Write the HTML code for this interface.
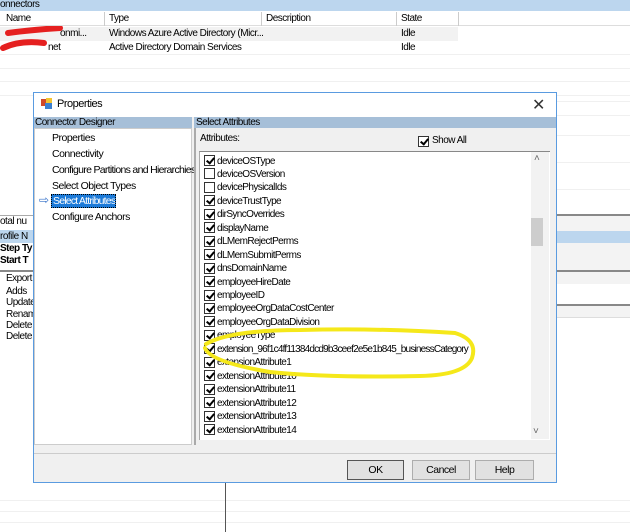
<!DOCTYPE html>
<html><head><style>
*{margin:0;padding:0;box-sizing:border-box}
body{width:630px;height:532px;overflow:hidden;background:#fff;font-family:"Liberation Sans",sans-serif;font-size:10.5px;color:#000;position:relative;letter-spacing:-0.5px}
.a{position:absolute;white-space:nowrap}
.hl{position:absolute;left:0;right:0;height:1px;background:#f0f0f0}
.cb{position:absolute;width:11px;height:11px;border:1px solid #333;background:#fff}
.cb.c::after{content:"";position:absolute;left:3px;top:0px;width:3px;height:6px;border:solid #000;border-width:0 2px 2px 0;transform:rotate(40deg)}
.btn{position:absolute;height:20px;border:1px solid #adadad;background:#e1e1e1;text-align:center;line-height:18px}
.it{font-size:10px;letter-spacing:-0.6px;line-height:11px}
</style></head><body>
<div class="a" style="left:0;top:0;width:630px;height:11px;background:#bcd6ee"></div>
<div class="a" style="left:0;top:-1px;font-size:10px">onnectors</div>
<div class="a" style="left:0;top:12px;width:630px;height:14px;border-bottom:1px solid #ddd;background:#fff"></div>
<div class="a" style="left:104px;top:12px;width:1px;height:14px;background:#ccc"></div>
<div class="a" style="left:261px;top:12px;width:1px;height:14px;background:#ccc"></div>
<div class="a" style="left:396px;top:12px;width:1px;height:14px;background:#ccc"></div>
<div class="a" style="left:458px;top:12px;width:1px;height:14px;background:#ccc"></div>
<div class="a" style="left:6px;top:13px;font-size:10px">Name</div>
<div class="a" style="left:109px;top:13px;font-size:10px">Type</div>
<div class="a" style="left:266px;top:13px;font-size:10px">Description</div>
<div class="a" style="left:401px;top:13px;font-size:10px">State</div>
<div class="a" style="left:0;top:27px;width:458px;height:14px;background:#f2f2f2"></div>
<div class="a" style="left:60px;top:28px;font-size:10px">onmi...</div>
<div class="a" style="left:109px;top:28px;font-size:10px">Windows Azure Active Directory (Micr...</div>
<div class="a" style="left:401px;top:28px;font-size:10px">Idle</div>
<div class="a" style="left:48px;top:42px;font-size:10px">net</div>
<div class="a" style="left:109px;top:42px;font-size:10px">Active Directory Domain Services</div>
<div class="a" style="left:401px;top:42px;font-size:10px">Idle</div>
<svg class="a" style="left:0;top:26px" width="80" height="32"><path d="M8 7 Q30 4 60 2" stroke="#e52020" stroke-width="6" fill="none" stroke-linecap="round"/><path d="M3 22 Q20 14 44 17" stroke="#e52020" stroke-width="6" fill="none" stroke-linecap="round"/></svg>
<div class="hl" style="top:54px"></div><div class="hl" style="top:68px"></div><div class="hl" style="top:81px"></div><div class="hl" style="top:95px"></div>
<div class="a" style="left:557px;top:101px;width:73px;height:1px;background:#f0f0f0"></div>
<div class="a" style="left:557px;top:115px;width:73px;height:1px;background:#f0f0f0"></div>
<div class="a" style="left:557px;top:135px;width:73px;height:1px;background:#f0f0f0"></div>
<div class="a" style="left:557px;top:162px;width:73px;height:1px;background:#f0f0f0"></div>
<div class="a" style="left:557px;top:189px;width:73px;height:1px;background:#f0f0f0"></div>
<div class="a" style="left:557px;top:214px;width:73px;height:2px;background:#888"></div>
<div class="a" style="left:557px;top:216px;width:73px;height:15px;background:#f3f3f3"></div>
<div class="a" style="left:557px;top:231px;width:73px;height:12px;background:#bcd6ee"></div>
<div class="a" style="left:557px;top:243px;width:73px;height:28px;background:#f3f3f3"></div>
<div class="a" style="left:557px;top:270px;width:73px;height:2px;background:#888"></div>
<div class="a" style="left:557px;top:272px;width:73px;height:12px;background:#f3f3f3"></div>
<div class="a" style="left:557px;top:304px;width:73px;height:2px;background:#888"></div>
<div class="a" style="left:557px;top:306px;width:73px;height:11px;background:#f3f3f3"></div>
<div class="a" style="left:557px;top:317px;width:73px;height:1px;background:#ddd"></div>
<div class="a" style="left:0;top:215px;width:33px;height:1px;background:#aaa"></div>
<div class="a" style="left:0;top:216px;font-size:10px">otal nu</div>
<div class="a" style="left:0;top:230px;width:33px;height:13px;background:#bcd6ee"></div>
<div class="a" style="left:0;top:231px;font-size:10px">rofile N</div>
<div class="a" style="left:0;top:243px;font-size:10px;font-weight:bold">Step Ty</div>
<div class="a" style="left:0;top:255px;font-size:10px;font-weight:bold">Start T</div>
<div class="a" style="left:0;top:270px;width:33px;height:2px;background:#888"></div>
<div class="a" style="left:6px;top:273px;font-size:10px">Export</div>
<div class="a" style="left:6px;top:286px;font-size:10px">Adds</div>
<div class="a" style="left:6px;top:297px;font-size:10px">Update</div>
<div class="a" style="left:6px;top:309px;font-size:10px">Renam</div>
<div class="a" style="left:6px;top:320px;font-size:10px">Delete</div>
<div class="a" style="left:6px;top:331px;font-size:10px">Delete</div>
<div class="a" style="left:0;top:500px;width:630px;height:1px;background:#f0f0f0"></div>
<div class="a" style="left:0;top:511px;width:630px;height:1px;background:#f0f0f0"></div>
<div class="a" style="left:0;top:522px;width:630px;height:1px;background:#f0f0f0"></div>
<div class="a" style="left:225px;top:482px;width:1px;height:50px;background:#555"></div>
<div class="a" style="left:33px;top:92px;width:524px;height:391px;border:1px solid #5a9be0;background:#f0f0f0">
 <div class="a" style="left:0;top:0;width:522px;height:24px;background:#fff"></div>
 <svg class="a" style="left:7px;top:5px" width="12" height="12"><rect x="0" y="1" width="7" height="7" fill="#d04a2a"/><rect x="5" y="0" width="6" height="5" fill="#f3c431"/><rect x="4" y="5" width="7" height="6" fill="#3b80d0"/></svg>
 <div class="a" style="left:23px;top:5px;font-size:11px">Properties</div>
 <div class="a" style="left:498px;top:2px;font-size:16px;color:#333">✕</div>
 <div class="a" style="left:0;top:24px;width:158px;height:11px;background:#a6bfd8;font-size:10px;line-height:11px;padding-left:1px">Connector Designer</div>
 <div class="a" style="left:0;top:35px;width:158px;height:317px;background:#fff;border:1px solid #ccc"></div>
 <div class="a" style="left:18px;top:39px">Properties</div>
 <div class="a" style="left:18px;top:55px">Connectivity</div>
 <div class="a" style="left:18px;top:71px;letter-spacing:-0.7px">Configure Partitions and Hierarchies</div>
 <div class="a" style="left:18px;top:87px">Select Object Types</div>
 <div class="a" style="left:5px;top:100px;color:#3470c8;font-size:12px">⇨</div>
 <div class="a" style="left:17px;top:101px;width:65px;height:14px;background:#1c7ad8;color:#fff;border:1px dotted #000;padding-left:1px;line-height:12px;letter-spacing:-0.8px;overflow:hidden">Select Attributes</div>
 <div class="a" style="left:18px;top:118px">Configure Anchors</div>
 <div class="a" style="left:160px;top:24px;width:362px;height:11px;background:#a6bfd8;font-size:10px;line-height:11px;padding-left:2px">Select Attributes</div>
 <div class="a" style="left:160px;top:35px;width:2px;height:317px;background:#aaa"></div>
 <div class="a" style="left:166px;top:40px;font-size:10px">Attributes:</div>
 <div class="cb c" style="left:384px;top:43px"></div>
 <div class="a" style="left:398px;top:42px;font-size:10px">Show All</div>
 <div class="a" style="left:165px;top:58px;width:351px;height:289px;background:#fff;border-top:1px solid #888;border-left:1px solid #aaa"></div>
 <div class="a" style="left:497px;top:59px;width:18px;height:287px;background:#f2f2f2"></div>
 <div class="a" style="left:497px;top:125px;width:12px;height:28px;background:#cdcdcd"></div>
 <div class="a" style="left:500px;top:60px;font-size:10px;color:#666">˄</div>
 <div class="a" style="left:499px;top:333px;font-size:10px;color:#666">˅</div>
 <div class="a" style="left:0;top:360px;width:522px;height:1px;background:#ccc"></div>
 <div class="btn" style="left:313px;top:367px;width:57px;border:1px solid #555">OK</div>
 <div class="btn" style="left:378px;top:367px;width:58px">Cancel</div>
 <div class="btn" style="left:441px;top:367px;width:59px">Help</div>
</div>
<div id="list"></div>
<script>
var items=[["deviceOSType",1],["deviceOSVersion",0],["devicePhysicalIds",0],["deviceTrustType",1],["dirSyncOverrides",1],["displayName",1],["dLMemRejectPerms",1],["dLMemSubmitPerms",1],["dnsDomainName",1],["employeeHireDate",1],["employeeID",1],["employeeOrgDataCostCenter",1],["employeeOrgDataDivision",1],["employeeType",1],["extension_96f1c4ff11384dcd9b3ceef2e5e1b845_businessCategory",1],["extensionAttribute1",1],["extensionAttribute10",1],["extensionAttribute11",1],["extensionAttribute12",1],["extensionAttribute13",1],["extensionAttribute14",1]];
var h="";items.forEach(function(it,i){var y=155+i*13.45;var ls=i==14?'letter-spacing:-0.8px;':'';h+='<div class="cb'+(it[1]?' c':'')+'" style="left:204px;top:'+y+'px"></div><div class="a it" style="'+ls+'left:217px;top:'+(y+0.5)+'px">'+it[0]+'</div>';});
document.getElementById("list").innerHTML=h;
</script>
<svg class="a" style="left:0;top:0" width="630" height="532"><path d="M206 344 Q230 330 300 330 Q380 328 455 333 Q478 340 472 358 Q465 375 420 376 Q330 378 270 372 Q210 362 205 348" stroke="#f5e81a" stroke-width="4" fill="none" stroke-linecap="round"/></svg>
</body></html>
